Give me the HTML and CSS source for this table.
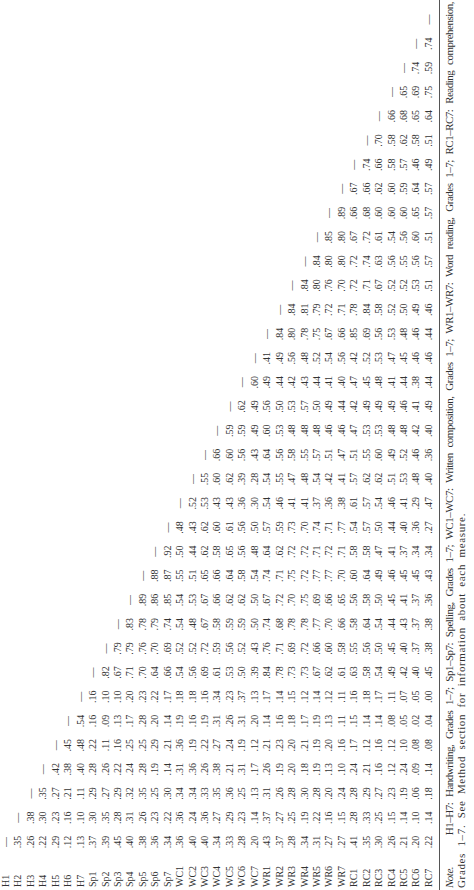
FILE: index.html
```html
<!DOCTYPE html>
<html>
<head>
<meta charset="utf-8">
<link rel="stylesheet" href="styles.css">
</head>
<body>
<div class="frame">
<div class="page">
  <div class="matrix">
    <div class="r"><span class="l">H1</span><span>—</span></div>
    <div class="r"><span class="l">H2</span><span>.35</span><span>—</span></div>
    <div class="r"><span class="l">H3</span><span>.26</span><span>.38</span><span>—</span></div>
    <div class="r"><span class="l">H4</span><span>.22</span><span>.30</span><span>.35</span><span>—</span></div>
    <div class="r"><span class="l">H5</span><span>.29</span><span>.23</span><span>.27</span><span>.42</span><span>—</span></div>
    <div class="r"><span class="l">H6</span><span>.12</span><span>.16</span><span>.21</span><span>.38</span><span>.45</span><span>—</span></div>
    <div class="r"><span class="l">H7</span><span>.13</span><span>.10</span><span>.11</span><span>.40</span><span>.48</span><span>.54</span><span>—</span></div>
    <div class="r"><span class="l">Sp1</span><span>.37</span><span>.30</span><span>.29</span><span>.28</span><span>.22</span><span>.16</span><span>.16</span><span>—</span></div>
    <div class="r"><span class="l">Sp2</span><span>.39</span><span>.35</span><span>.27</span><span>.26</span><span>.11</span><span>.09</span><span>.10</span><span>.82</span><span>—</span></div>
    <div class="r"><span class="l">Sp3</span><span>.45</span><span>.28</span><span>.29</span><span>.22</span><span>.16</span><span>.13</span><span>.10</span><span>.67</span><span>.79</span><span>—</span></div>
    <div class="r"><span class="l">Sp4</span><span>.40</span><span>.31</span><span>.32</span><span>.24</span><span>.25</span><span>.17</span><span>.20</span><span>.71</span><span>.79</span><span>.83</span><span>—</span></div>
    <div class="r"><span class="l">Sp5</span><span>.38</span><span>.26</span><span>.35</span><span>.28</span><span>.25</span><span>.28</span><span>.23</span><span>.70</span><span>.76</span><span>.78</span><span>.89</span><span>—</span></div>
    <div class="r"><span class="l">Sp6</span><span>.36</span><span>.23</span><span>.25</span><span>.19</span><span>.29</span><span>.20</span><span>.22</span><span>.64</span><span>.70</span><span>.79</span><span>.86</span><span>.88</span><span>—</span></div>
    <div class="r"><span class="l">Sp7</span><span>.34</span><span>.22</span><span>.30</span><span>.14</span><span>.21</span><span>.14</span><span>.17</span><span>.66</span><span>.69</span><span>.74</span><span>.85</span><span>.87</span><span>.92</span><span>—</span></div>
    <div class="r"><span class="l">WC1</span><span>.36</span><span>.36</span><span>.34</span><span>.31</span><span>.36</span><span>.19</span><span>.18</span><span>.54</span><span>.52</span><span>.54</span><span>.54</span><span>.55</span><span>.50</span><span>.48</span><span>—</span></div>
    <div class="r"><span class="l">WC2</span><span>.40</span><span>.24</span><span>.34</span><span>.36</span><span>.19</span><span>.16</span><span>.18</span><span>.56</span><span>.52</span><span>.48</span><span>.53</span><span>.51</span><span>.44</span><span>.43</span><span>.52</span><span>—</span></div>
    <div class="r"><span class="l">WC3</span><span>.40</span><span>.36</span><span>.33</span><span>.26</span><span>.22</span><span>.19</span><span>.16</span><span>.69</span><span>.72</span><span>.67</span><span>.67</span><span>.65</span><span>.62</span><span>.62</span><span>.53</span><span>.55</span><span>—</span></div>
    <div class="r"><span class="l">WC4</span><span>.34</span><span>.27</span><span>.35</span><span>.38</span><span>.27</span><span>.31</span><span>.34</span><span>.61</span><span>.59</span><span>.58</span><span>.66</span><span>.66</span><span>.58</span><span>.60</span><span>.43</span><span>.60</span><span>.66</span><span>—</span></div>
    <div class="r"><span class="l">WC5</span><span>.33</span><span>.29</span><span>.36</span><span>.21</span><span>.24</span><span>.26</span><span>.23</span><span>.53</span><span>.56</span><span>.59</span><span>.62</span><span>.64</span><span>.65</span><span>.61</span><span>.43</span><span>.62</span><span>.60</span><span>.59</span><span>—</span></div>
    <div class="r"><span class="l">WC6</span><span>.28</span><span>.23</span><span>.25</span><span>.31</span><span>.19</span><span>.31</span><span>.37</span><span>.50</span><span>.52</span><span>.59</span><span>.62</span><span>.58</span><span>.56</span><span>.56</span><span>.36</span><span>.39</span><span>.56</span><span>.59</span><span>.62</span><span>—</span></div>
    <div class="r"><span class="l">WC7</span><span>.20</span><span>.14</span><span>.13</span><span>.17</span><span>.12</span><span>.20</span><span>.13</span><span>.39</span><span>.43</span><span>.50</span><span>.50</span><span>.54</span><span>.48</span><span>.50</span><span>.30</span><span>.28</span><span>.43</span><span>.49</span><span>.49</span><span>.60</span><span>—</span></div>
    <div class="r"><span class="l">WR1</span><span>.43</span><span>.37</span><span>.31</span><span>.26</span><span>.21</span><span>.14</span><span>.17</span><span>.84</span><span>.76</span><span>.74</span><span>.67</span><span>.74</span><span>.64</span><span>.57</span><span>.54</span><span>.54</span><span>.64</span><span>.60</span><span>.56</span><span>.49</span><span>.41</span><span>—</span></div>
    <div class="r"><span class="l">WR2</span><span>.37</span><span>.27</span><span>.26</span><span>.19</span><span>.23</span><span>.16</span><span>.14</span><span>.78</span><span>.71</span><span>.68</span><span>.72</span><span>.71</span><span>.62</span><span>.59</span><span>.46</span><span>.55</span><span>.56</span><span>.53</span><span>.50</span><span>.44</span><span>.49</span><span>.84</span><span>—</span></div>
    <div class="r"><span class="l">WR3</span><span>.28</span><span>.25</span><span>.28</span><span>.20</span><span>.20</span><span>.18</span><span>.15</span><span>.73</span><span>.69</span><span>.78</span><span>.70</span><span>.75</span><span>.72</span><span>.73</span><span>.41</span><span>.47</span><span>.58</span><span>.48</span><span>.53</span><span>.42</span><span>.56</span><span>.80</span><span>.84</span><span>—</span></div>
    <div class="r"><span class="l">WR4</span><span>.34</span><span>.19</span><span>.30</span><span>.18</span><span>.21</span><span>.17</span><span>.12</span><span>.73</span><span>.72</span><span>.78</span><span>.75</span><span>.72</span><span>.72</span><span>.70</span><span>.41</span><span>.48</span><span>.55</span><span>.48</span><span>.57</span><span>.43</span><span>.48</span><span>.78</span><span>.81</span><span>.84</span><span>—</span></div>
    <div class="r"><span class="l">WR5</span><span>.31</span><span>.22</span><span>.28</span><span>.19</span><span>.19</span><span>.19</span><span>.14</span><span>.67</span><span>.66</span><span>.77</span><span>.69</span><span>.77</span><span>.71</span><span>.74</span><span>.37</span><span>.54</span><span>.57</span><span>.48</span><span>.50</span><span>.44</span><span>.52</span><span>.75</span><span>.79</span><span>.80</span><span>.84</span><span>—</span></div>
    <div class="r"><span class="l">WR6</span><span>.27</span><span>.16</span><span>.20</span><span>.13</span><span>.20</span><span>.13</span><span>.12</span><span>.62</span><span>.60</span><span>.70</span><span>.66</span><span>.77</span><span>.72</span><span>.71</span><span>.36</span><span>.42</span><span>.51</span><span>.46</span><span>.49</span><span>.41</span><span>.54</span><span>.67</span><span>.72</span><span>.76</span><span>.80</span><span>.85</span><span>—</span></div>
    <div class="r"><span class="l">WR7</span><span>.27</span><span>.15</span><span>.24</span><span>.10</span><span>.16</span><span>.11</span><span>.11</span><span>.61</span><span>.58</span><span>.66</span><span>.65</span><span>.70</span><span>.71</span><span>.77</span><span>.38</span><span>.41</span><span>.47</span><span>.46</span><span>.44</span><span>.40</span><span>.56</span><span>.66</span><span>.71</span><span>.70</span><span>.80</span><span>.80</span><span>.89</span><span>—</span></div>
    <div class="r"><span class="l">RC1</span><span>.41</span><span>.28</span><span>.28</span><span>.24</span><span>.17</span><span>.15</span><span>.16</span><span>.63</span><span>.55</span><span>.58</span><span>.56</span><span>.60</span><span>.58</span><span>.54</span><span>.61</span><span>.57</span><span>.51</span><span>.47</span><span>.42</span><span>.47</span><span>.42</span><span>.85</span><span>.78</span><span>.72</span><span>.72</span><span>.67</span><span>.66</span><span>.67</span><span>—</span></div>
    <div class="r"><span class="l">RC2</span><span>.35</span><span>.33</span><span>.29</span><span>.21</span><span>.12</span><span>.14</span><span>.18</span><span>.58</span><span>.56</span><span>.64</span><span>.58</span><span>.64</span><span>.58</span><span>.57</span><span>.57</span><span>.62</span><span>.55</span><span>.53</span><span>.49</span><span>.45</span><span>.52</span><span>.69</span><span>.84</span><span>.71</span><span>.74</span><span>.72</span><span>.68</span><span>.66</span><span>.74</span><span>—</span></div>
    <div class="r"><span class="l">RC3</span><span>.30</span><span>.25</span><span>.27</span><span>.16</span><span>.16</span><span>.14</span><span>.17</span><span>.54</span><span>.50</span><span>.54</span><span>.50</span><span>.49</span><span>.47</span><span>.50</span><span>.54</span><span>.62</span><span>.60</span><span>.53</span><span>.49</span><span>.48</span><span>.53</span><span>.56</span><span>.58</span><span>.67</span><span>.63</span><span>.61</span><span>.60</span><span>.62</span><span>.66</span><span>.70</span><span>—</span></div>
    <div class="r"><span class="l">RC4</span><span>.26</span><span>.15</span><span>.23</span><span>.12</span><span>.12</span><span>.08</span><span>.11</span><span>.49</span><span>.45</span><span>.44</span><span>.45</span><span>.46</span><span>.41</span><span>.44</span><span>.46</span><span>.51</span><span>.49</span><span>.48</span><span>.49</span><span>.41</span><span>.47</span><span>.53</span><span>.52</span><span>.52</span><span>.56</span><span>.54</span><span>.60</span><span>.60</span><span>.58</span><span>.58</span><span>.66</span><span>—</span></div>
    <div class="r"><span class="l">RC5</span><span>.21</span><span>.14</span><span>.19</span><span>.24</span><span>.10</span><span>.05</span><span>.07</span><span>.42</span><span>.40</span><span>.43</span><span>.41</span><span>.45</span><span>.37</span><span>.40</span><span>.41</span><span>.53</span><span>.52</span><span>.48</span><span>.46</span><span>.44</span><span>.45</span><span>.48</span><span>.50</span><span>.52</span><span>.55</span><span>.56</span><span>.60</span><span>.59</span><span>.57</span><span>.62</span><span>.68</span><span>.65</span><span>—</span></div>
    <div class="r"><span class="l">RC6</span><span>.20</span><span>.10</span><span>.06</span><span>.09</span><span>.08</span><span>.02</span><span>.05</span><span>.40</span><span>.37</span><span>.37</span><span>.37</span><span>.45</span><span>.34</span><span>.36</span><span>.29</span><span>.48</span><span>.46</span><span>.42</span><span>.41</span><span>.38</span><span>.46</span><span>.46</span><span>.49</span><span>.53</span><span>.56</span><span>.60</span><span>.65</span><span>.64</span><span>.46</span><span>.58</span><span>.65</span><span>.69</span><span>.74</span><span>—</span></div>
    <div class="r"><span class="l">RC7</span><span>.22</span><span>.14</span><span>.18</span><span>.14</span><span>.08</span><span>.04</span><span>.00</span><span>.45</span><span>.38</span><span>.38</span><span>.36</span><span>.43</span><span>.34</span><span>.27</span><span>.47</span><span>.40</span><span>.36</span><span>.40</span><span>.49</span><span>.44</span><span>.46</span><span>.44</span><span>.46</span><span>.51</span><span>.57</span><span>.51</span><span>.57</span><span>.57</span><span>.49</span><span>.51</span><span>.64</span><span>.75</span><span>.59</span><span>.74</span><span>—</span></div>
  </div>
  <div class="rule"></div>
  <div class="note">
    <p class="n1"><i class="lead">Note.</i> H1–H7: Handwriting, Grades 1–7; Sp1–Sp7: Spelling, Grades 1–7; WC1–WC7: Written composition, Grades 1–7; WR1–WR7: Word reading, Grades 1–7; RC1–RC7: Reading comprehension,</p>
    <p class="n2">Grades 1–7. See Method section for information about each measure.</p>
  </div>
</div>
</div>
</body>
</html>
```
FILE: styles.css
```css
html, body {
  margin: 0;
  padding: 0;
  width: 474px;
  height: 890px;
  overflow: hidden;
  background: #ffffff;
}

.frame {
  width: 474px;
  height: 890px;
  overflow: hidden;
}

.page {
  width: 890px;
  height: 474px;
  transform-origin: 0 0;
  transform: translateY(890px) rotate(-90deg);
  font-family: "Liberation Serif", "Times New Roman", serif;
  color: #333333;
}

.matrix {
  display: flex;
  flex-direction: column;
}

.r {
  display: grid;
  grid-template-columns: 36px repeat(35, 24.2px);
  height: 12.45px;
  line-height: 12.45px;
  font-size: 10px;
}

.r span {
  text-align: center;
  white-space: nowrap;
}

.r .l {
  text-align: left;
  padding-left: 3px;
}

.rule {
  margin-top: 4px;
  border-top: 1px solid #555555;
  width: 890px;
}

.note {
  margin-top: 4px;
  padding: 0 2px;
  font-size: 11px;
  line-height: 11.5px;
}

.note p {
  margin: 0;
}

.n1 {
  text-align: justify;
  text-align-last: justify;
  letter-spacing: -0.5px;
}

.lead {
  margin-right: 26px;
}

.n2 {
  letter-spacing: 0.65px;
  word-spacing: 3px;
  white-space: nowrap;
}
```
